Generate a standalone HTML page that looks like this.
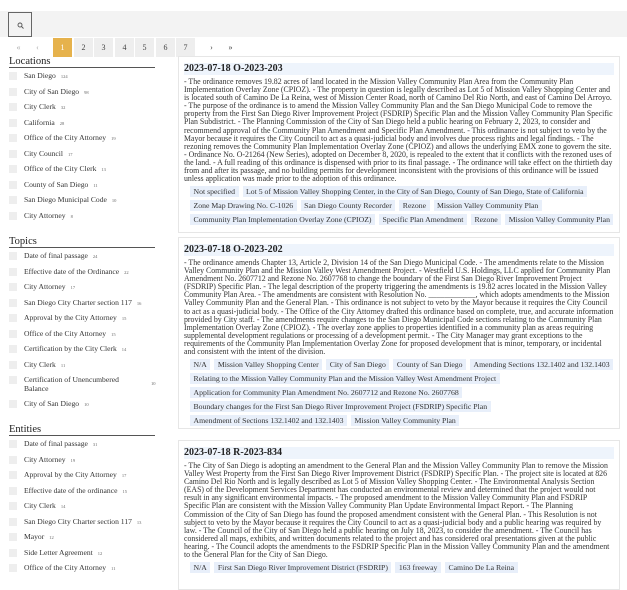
<!DOCTYPE html>
<html><head><meta charset="utf-8"><style>
*{margin:0;padding:0;box-sizing:border-box}
body{width:627px;height:573px;overflow:hidden;background:#fff;font-family:"Liberation Serif",serif;color:#333;position:relative}
.band{position:absolute;left:0;top:11px;width:627px;height:26px;background:#f3f3f3}
.search{position:absolute;left:8px;top:12px;width:24px;height:25px;border:1px solid #666;background:#f3f3f3}
.search svg{position:absolute;left:8px;top:9px}
.pg{position:absolute;top:38px;height:19px;width:19px;font-size:8px;text-align:center;line-height:19px;color:#444}
.pg.g{background:#eee}.pg.o{background:#e6b24c;color:#fff}
.side{position:absolute;left:9px;width:146px}
.side h3{font-weight:normal;font-size:10.5px;color:#222;border-bottom:1px solid #555;line-height:11px;height:12px}
.it{position:relative;height:15.5px;font-size:7.6px;line-height:15.5px;padding-left:15px;color:#333;white-space:nowrap}
.it:before{content:"";position:absolute;left:0;top:4px;width:8px;height:8px;background:#eee}
.it b{font-weight:normal;font-size:4.5px;margin-left:5px;color:#666}
.card{position:absolute;left:178px;width:442px;border:1px solid #e6e6e6;padding:6px 5px;overflow:hidden}
.card h2{font-size:10px;font-weight:bold;color:#222;background:#eef4fc;line-height:12px;height:12px}
.card p{font-size:7.85px;line-height:8.1px;margin-top:3px;color:#333}
.tags{margin-top:3px;padding-left:6px;font-size:0;line-height:0;white-space:nowrap}
.tags span{display:inline-block;background:#e8effa;font-size:7.75px;line-height:11px;height:11px;padding:0 3.5px;margin:0 4px 3px 0;color:#333;vertical-align:top}
</style></head><body>
<div class="band"></div>
<div class="search"><svg width="7" height="7" viewBox="0 0 7 7"><circle cx="3" cy="3" r="2" fill="none" stroke="#555" stroke-width="0.9"/><path d="M4.5 4.5L6.5 6.5" stroke="#555" stroke-width="0.9"/></svg></div>
<div class="pg" style="left:9px;color:#aaa">«</div>
<div class="pg" style="left:28px;color:#aaa">‹</div>
<div class="pg o" style="left:53px">1</div>
<div class="pg g" style="left:74px">2</div>
<div class="pg g" style="left:94px">3</div>
<div class="pg g" style="left:115px">4</div>
<div class="pg g" style="left:135px">5</div>
<div class="pg g" style="left:156px">6</div>
<div class="pg g" style="left:176px">7</div>
<div class="pg" style="left:202px">›</div>
<div class="pg" style="left:221px">»</div>

<div class="side" style="top:56px"><h3>Locations</h3>
<div class="it">San Diego<b>124</b></div><div class="it">City of San Diego<b>98</b></div><div class="it">City Clerk<b>32</b></div><div class="it">California<b>28</b></div><div class="it">Office of the City Attorney<b>19</b></div><div class="it">City Council<b>17</b></div><div class="it">Office of the City Clerk<b>13</b></div><div class="it">County of San Diego<b>11</b></div><div class="it">San Diego Municipal Code<b>10</b></div><div class="it">City Attorney<b>8</b></div>
</div>
<div class="side" style="top:236px"><h3>Topics</h3>
<div class="it">Date of final passage<b>24</b></div><div class="it">Effective date of the Ordinance<b>22</b></div><div class="it">City Attorney<b>17</b></div><div class="it">San Diego City Charter section 117<b>16</b></div><div class="it">Approval by the City Attorney<b>15</b></div><div class="it">Office of the City Attorney<b>15</b></div><div class="it">Certification by the City Clerk<b>14</b></div><div class="it">City Clerk<b>11</b></div>
<div class="it" style="height:24px;line-height:8.5px;padding-top:4px;white-space:normal;width:110px">Certification of Unencumbered Balance<b style="position:absolute;left:137px;top:8px">10</b></div>
<div class="it">City of San Diego<b>10</b></div>
</div>
<div class="side" style="top:424px"><h3>Entities</h3>
<div class="it">Date of final passage<b>31</b></div><div class="it">City Attorney<b>19</b></div><div class="it">Approval by the City Attorney<b>17</b></div><div class="it">Effective date of the ordinance<b>15</b></div><div class="it">City Clerk<b>14</b></div><div class="it">San Diego City Charter section 117<b>13</b></div><div class="it">Mayor<b>12</b></div><div class="it">Side Letter Agreement<b>12</b></div><div class="it">Office of the City Attorney<b>11</b></div>
</div>

<div class="card" style="top:56px;height:177px"><h2>2023-07-18 O-2023-203</h2>
<p>- The ordinance removes 19.82 acres of land located in the Mission Valley Community Plan Area from the Community Plan Implementation Overlay Zone (CPIOZ). - The property in question is legally described as Lot 5 of Mission Valley Shopping Center and is located south of Camino De La Reina, west of Mission Center Road, north of Camino Del Rio North, and east of Camino Del Arroyo. - The purpose of the ordinance is to amend the Mission Valley Community Plan and the San Diego Municipal Code to remove the property from the First San Diego River Improvement Project (FSDRIP) Specific Plan and the Mission Valley Community Plan Specific Plan Subdistrict. - The Planning Commission of the City of San Diego held a public hearing on February 2, 2023, to consider and recommend approval of the Community Plan Amendment and Specific Plan Amendment. - This ordinance is not subject to veto by the Mayor because it requires the City Council to act as a quasi-judicial body and involves due process rights and legal findings. - The rezoning removes the Community Plan Implementation Overlay Zone (CPIOZ) and allows the underlying EMX zone to govern the site. - Ordinance No. O-21264 (New Series), adopted on December 8, 2020, is repealed to the extent that it conflicts with the rezoned uses of the land. - A full reading of this ordinance is dispensed with prior to its final passage. - The ordinance will take effect on the thirtieth day from and after its passage, and no building permits for development inconsistent with the provisions of this ordinance will be issued unless application was made prior to the adoption of this ordinance.</p>
<div class="tags"><span>Not specified</span><span>Lot 5 of Mission Valley Shopping Center, in the City of San Diego, County of San Diego, State of California</span><br><span>Zone Map Drawing No. C-1026</span><span>San Diego County Recorder</span><span>Rezone</span><span>Mission Valley Community Plan</span><br><span>Community Plan Implementation Overlay Zone (CPIOZ)</span><span>Specific Plan Amendment</span><span>Rezone</span><span>Mission Valley Community Plan</span></div>
</div>

<div class="card" style="top:237px;height:192px"><h2>2023-07-18 O-2023-202</h2>
<p>- The ordinance amends Chapter 13, Article 2, Division 14 of the San Diego Municipal Code. - The amendments relate to the Mission Valley Community Plan and the Mission Valley West Amendment Project. - Westfield U.S. Holdings, LLC applied for Community Plan Amendment No. 2607712 and Rezone No. 2607768 to change the boundary of the First San Diego River Improvement Project (FSDRIP) Specific Plan. - The legal description of the property triggering the amendments is 19.82 acres located in the Mission Valley Community Plan Area. - The amendments are consistent with Resolution No. ____________, which adopts amendments to the Mission Valley Community Plan and the General Plan. - This ordinance is not subject to veto by the Mayor because it requires the City Council to act as a quasi-judicial body. - The Office of the City Attorney drafted this ordinance based on complete, true, and accurate information provided by City staff. - The amendments require changes to the San Diego Municipal Code sections relating to the Community Plan Implementation Overlay Zone (CPIOZ). - The overlay zone applies to properties identified in a community plan as areas requiring supplemental development regulations or processing of a development permit. - The City Manager may grant exceptions to the requirements of the Community Plan Implementation Overlay Zone for proposed development that is minor, temporary, or incidental and consistent with the intent of the division.</p>
<div class="tags"><span>N/A</span><span>Mission Valley Shopping Center</span><span>City of San Diego</span><span>County of San Diego</span><span>Amending Sections 132.1402 and 132.1403</span><br><span>Relating to the Mission Valley Community Plan and the Mission Valley West Amendment Project</span><br><span>Application for Community Plan Amendment No. 2607712 and Rezone No. 2607768</span><br><span>Boundary changes for the First San Diego River Improvement Project (FSDRIP) Specific Plan</span><br><span>Amendment of Sections 132.1402 and 132.1403</span><span>Mission Valley Community Plan</span></div>
</div>

<div class="card" style="top:440px;height:150px"><h2>2023-07-18 R-2023-834</h2>
<p>- The City of San Diego is adopting an amendment to the General Plan and the Mission Valley Community Plan to remove the Mission Valley West Property from the First San Diego River Improvement District (FSDRIP) Specific Plan. - The project site is located at 826 Camino Del Rio North and is legally described as Lot 5 of Mission Valley Shopping Center. - The Environmental Analysis Section (EAS) of the Development Services Department has conducted an environmental review and determined that the project would not result in any significant environmental impacts. - The proposed amendment to the Mission Valley Community Plan and FSDRIP Specific Plan are consistent with the Mission Valley Community Plan Update Environmental Impact Report. - The Planning Commission of the City of San Diego has found the proposed amendment consistent with the General Plan. - This Resolution is not subject to veto by the Mayor because it requires the City Council to act as a quasi-judicial body and a public hearing was required by law. - The Council of the City of San Diego held a public hearing on July 18, 2023, to consider the amendment. - The Council has considered all maps, exhibits, and written documents related to the project and has considered oral presentations given at the public hearing. - The Council adopts the amendments to the FSDRIP Specific Plan in the Mission Valley Community Plan and the amendment to the General Plan for the City of San Diego.</p>
<div class="tags"><span>N/A</span><span>First San Diego River Improvement District (FSDRIP)</span><span>163 freeway</span><span>Camino De La Reina</span></div>
</div>
</body></html>
